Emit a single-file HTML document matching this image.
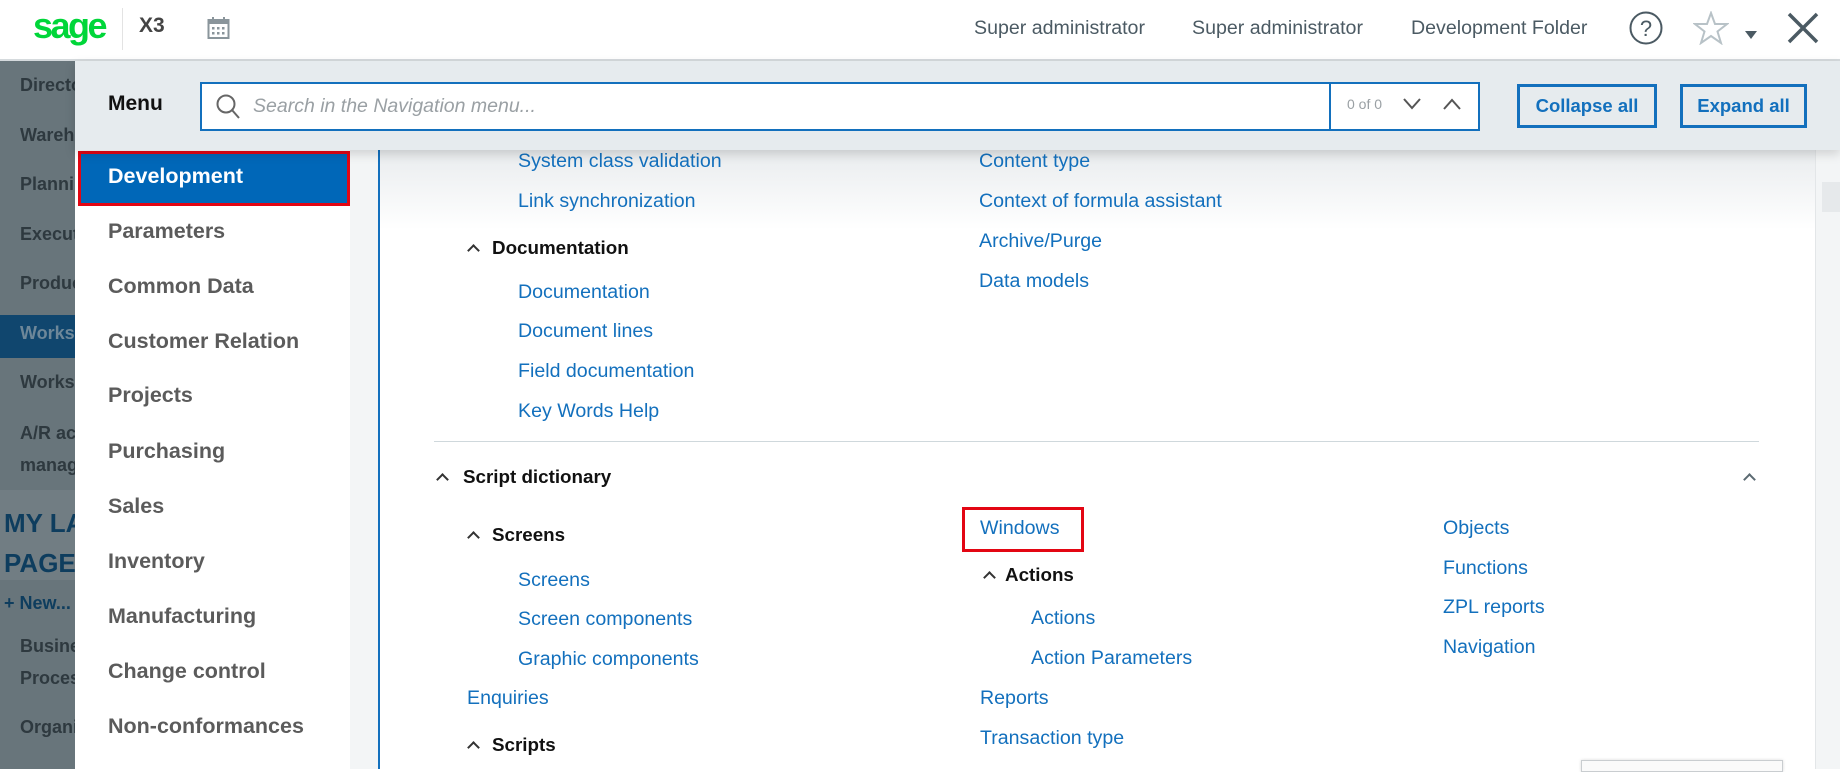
<!DOCTYPE html>
<html><head><meta charset="utf-8"><style>
*{margin:0;padding:0;box-sizing:border-box}
body{width:1840px;height:769px;overflow:hidden;background:#fff;font-family:"Liberation Sans",sans-serif;position:relative}
.a{position:absolute;white-space:nowrap}
.hd{color:#4b5a63;font-size:19.6px}
.u{color:#2e393f;font-size:18px;font-weight:bold}
.m{color:#5b5b5b;font-size:21.5px;font-weight:bold;left:108px}
.l{color:#1370bd;font-size:19.6px}
.h{color:#111;font-size:18.8px;font-weight:bold}
.c{position:absolute;width:9px;height:9px;border-left:2px solid #333;border-top:2px solid #333;transform:rotate(45deg)}
</style></head><body>
<div class="a" style="left:0;top:0;width:1840px;height:61px;border-bottom:2px solid #d5dadd;background:#fff"></div>
<div class="a" style="left:33px;top:5px;font-size:36px;font-weight:bold;color:#00d639;letter-spacing:-2.5px">sage</div>
<div class="a" style="left:122px;top:8px;width:1px;height:42px;background:#e3e3e3"></div>
<div class="a" style="left:139px;top:14px;font-size:21px;font-weight:bold;color:#444">X3</div>
<svg class="a" style="left:207px;top:16px" width="23" height="23" viewBox="0 0 23 23"><rect x="1.5" y="4" width="20" height="18" fill="none" stroke="#8a959b" stroke-width="2"/><rect x="1.5" y="4" width="20" height="4" fill="#8a959b"/><line x1="6" y1="1" x2="6" y2="5" stroke="#8a959b" stroke-width="2"/><line x1="17" y1="1" x2="17" y2="5" stroke="#8a959b" stroke-width="2"/><g fill="#8a959b"><rect x="5" y="11" width="2.5" height="2.5"/><rect x="10" y="11" width="2.5" height="2.5"/><rect x="15" y="11" width="2.5" height="2.5"/><rect x="5" y="16" width="2.5" height="2.5"/><rect x="10" y="16" width="2.5" height="2.5"/><rect x="15" y="16" width="2.5" height="2.5"/></g></svg>
<div class="a hd" style="left:974px;top:17px">Super administrator</div>
<div class="a hd" style="left:1192px;top:17px">Super administrator</div>
<div class="a hd" style="left:1411px;top:17px">Development Folder</div>
<svg class="a" style="left:1629px;top:11px" width="34" height="34"><circle cx="17" cy="17" r="15.5" fill="none" stroke="#4b5a63" stroke-width="2"/><text x="17" y="25" text-anchor="middle" font-family="Liberation Sans" font-size="22" fill="#4b5a63">?</text></svg>
<svg class="a" style="left:1693px;top:11px" width="36" height="34" viewBox="0 0 36 34"><polygon points="18,2 22,13 34,13 24.5,20.5 28,32 18,25 8,32 11.5,20.5 2,13 14,13" fill="none" stroke="#b8c2c7" stroke-width="2"/></svg>
<svg class="a" style="left:1744px;top:30px" width="14" height="10"><polygon points="1,1 13,1 7,9" fill="#4b5a63"/></svg>
<svg class="a" style="left:1786px;top:12px" width="34" height="32"><path d="M3 2 L31 30 M31 2 L3 30" stroke="#4b5a63" stroke-width="3.5"/></svg>
<div class="a" style="left:0;top:61px;width:75px;height:708px;background:#68757b"></div>
<div class="a" style="left:0;top:315px;width:75px;height:43px;background:#10466e"></div>
<div class="a" style="left:0;top:490px;width:75px;height:90px;background:#717d83"></div>
<div class="a u" style="left:20px;top:75px">Directory</div>
<div class="a u" style="left:20px;top:125px">Warehouse</div>
<div class="a u" style="left:20px;top:174px">Planning</div>
<div class="a u" style="left:20px;top:224px">Execution</div>
<div class="a u" style="left:20px;top:273px">Production</div>
<div class="a u" style="left:20px;top:323px;color:#6d8799">Workspace</div>
<div class="a u" style="left:20px;top:372px">Workspace</div>
<div class="a u" style="left:20px;top:423px">A/R accounting</div>
<div class="a u" style="left:20px;top:455px">management</div>
<div class="a" style="left:4px;top:508px;font-size:26px;font-weight:bold;color:#0e3d5e">MY LANDING</div>
<div class="a" style="left:4px;top:548px;font-size:26px;font-weight:bold;color:#0e3d5e">PAGES</div>
<div class="a" style="left:4px;top:593px;font-size:18px;font-weight:bold;color:#0e3d5e">+ New...</div>
<div class="a u" style="left:20px;top:636px">Business</div>
<div class="a u" style="left:20px;top:668px">Process</div>
<div class="a u" style="left:20px;top:717px">Organization</div>
<div class="a" style="left:75px;top:61px;width:1765px;height:89px;background:#e6ebee;box-shadow:0 4px 10px rgba(0,0,0,.15);z-index:3"></div>
<div class="a" style="left:108px;top:92px;font-size:21px;font-weight:bold;color:#111;z-index:4">Menu</div>
<div class="a" style="left:200px;top:82px;width:1280px;height:49px;border:2px solid #1370bd;background:#fff;z-index:4"></div>
<div class="a" style="left:1329px;top:83px;width:2px;height:47px;background:#1370bd;z-index:5"></div>
<svg class="a" style="left:215px;top:93px;z-index:5" width="26" height="28"><circle cx="11" cy="11" r="8.5" fill="none" stroke="#666" stroke-width="2"/><line x1="17" y1="17" x2="24" y2="25" stroke="#666" stroke-width="2"/></svg>
<div class="a" style="left:253px;top:95px;font-size:19.5px;font-style:italic;color:#9aa0a4;z-index:5">Search in the Navigation menu...</div>
<div class="a" style="left:1347px;top:96px;font-size:14px;color:#9aa0a4;z-index:5">0 of 0</div>
<svg class="a" style="left:1402px;top:97px;z-index:5" width="20" height="14"><path d="M2 2 L10 11 L18 2" fill="none" stroke="#555" stroke-width="2"/></svg>
<svg class="a" style="left:1442px;top:97px;z-index:5" width="20" height="14"><path d="M2 12 L10 3 L18 12" fill="none" stroke="#555" stroke-width="2"/></svg>
<div class="a" style="left:1517px;top:84px;width:140px;height:44px;border:3px solid #1370bd;color:#1370bd;font-weight:bold;font-size:18.5px;text-align:center;line-height:38px;z-index:4">Collapse all</div>
<div class="a" style="left:1680px;top:84px;width:127px;height:44px;border:3px solid #1370bd;color:#1370bd;font-weight:bold;font-size:18.5px;text-align:center;line-height:38px;z-index:4">Expand all</div>
<div class="a" style="left:75px;top:150px;width:275px;height:619px;background:#fff"></div>
<div class="a" style="left:350px;top:150px;width:28px;height:619px;background:#f3f5f6"></div>
<div class="a" style="left:78px;top:151px;width:272px;height:55px;background:#0067b8;border:3px solid #e30613"></div>
<div class="a m" style="top:164px;color:#fff">Development</div>
<div class="a m" style="top:219px">Parameters</div>
<div class="a m" style="top:274px">Common Data</div>
<div class="a m" style="top:329px">Customer Relation</div>
<div class="a m" style="top:383px">Projects</div>
<div class="a m" style="top:439px">Purchasing</div>
<div class="a m" style="top:494px">Sales</div>
<div class="a m" style="top:549px">Inventory</div>
<div class="a m" style="top:604px">Manufacturing</div>
<div class="a m" style="top:659px">Change control</div>
<div class="a m" style="top:714px">Non-conformances</div>
<div class="a" style="left:378px;top:150px;width:2px;height:619px;background:#1370bd"></div>
<div class="a" style="left:1815px;top:150px;width:25px;height:619px;background:#f3f5f6;border-left:1px solid #e3e6e8"></div>
<div class="a" style="left:1822px;top:182px;width:18px;height:30px;background:#e6e9eb"></div>
<div class="a" style="left:380px;top:150px;width:1435px;height:80px;background:linear-gradient(#e9ecee,rgba(255,255,255,0));z-index:1"></div>
<div class="a l" style="left:518px;top:150px;z-index:2">System class validation</div>
<div class="a l" style="left:518px;top:190px;z-index:2">Link synchronization</div>
<div class="c" style="left:469px;top:246px"></div><div class="a h" style="left:492px;top:237px">Documentation</div>
<div class="a l" style="left:518px;top:281px">Documentation</div>
<div class="a l" style="left:518px;top:320px">Document lines</div>
<div class="a l" style="left:518px;top:360px">Field documentation</div>
<div class="a l" style="left:518px;top:400px">Key Words Help</div>
<div class="a" style="left:434px;top:441px;width:1325px;height:1px;background:#cfd8dc"></div>
<div class="c" style="left:438px;top:475px"></div><div class="a h" style="left:463px;top:466px">Script dictionary</div>
<div class="c" style="left:1745px;top:475px;border-color:#5b6a72"></div>
<div class="c" style="left:469px;top:533px"></div><div class="a h" style="left:492px;top:524px">Screens</div>
<div class="a l" style="left:518px;top:569px">Screens</div>
<div class="a l" style="left:518px;top:608px">Screen components</div>
<div class="a l" style="left:518px;top:648px">Graphic components</div>
<div class="a l" style="left:467px;top:687px">Enquiries</div>
<div class="c" style="left:469px;top:743px"></div><div class="a h" style="left:492px;top:734px">Scripts</div>
<div class="a l" style="left:979px;top:150px;z-index:2">Content type</div>
<div class="a l" style="left:979px;top:190px;z-index:2">Context of formula assistant</div>
<div class="a l" style="left:979px;top:230px">Archive/Purge</div>
<div class="a l" style="left:979px;top:270px">Data models</div>
<div class="a" style="left:962px;top:507px;width:122px;height:45px;border:3px solid #e30613"></div>
<div class="a l" style="left:980px;top:517px">Windows</div>
<div class="c" style="left:985px;top:573px"></div><div class="a h" style="left:1005px;top:564px">Actions</div>
<div class="a l" style="left:1031px;top:607px">Actions</div>
<div class="a l" style="left:1031px;top:647px">Action Parameters</div>
<div class="a l" style="left:980px;top:687px">Reports</div>
<div class="a l" style="left:980px;top:727px">Transaction type</div>
<div class="a l" style="left:1443px;top:517px">Objects</div>
<div class="a l" style="left:1443px;top:557px">Functions</div>
<div class="a l" style="left:1443px;top:596px">ZPL reports</div>
<div class="a l" style="left:1443px;top:636px">Navigation</div>
<div class="a" style="left:1581px;top:760px;width:202px;height:12px;border:1px solid #c9cdd0;background:#fafafa;box-shadow:0 0 3px rgba(0,0,0,.15)"></div>
</body></html>
